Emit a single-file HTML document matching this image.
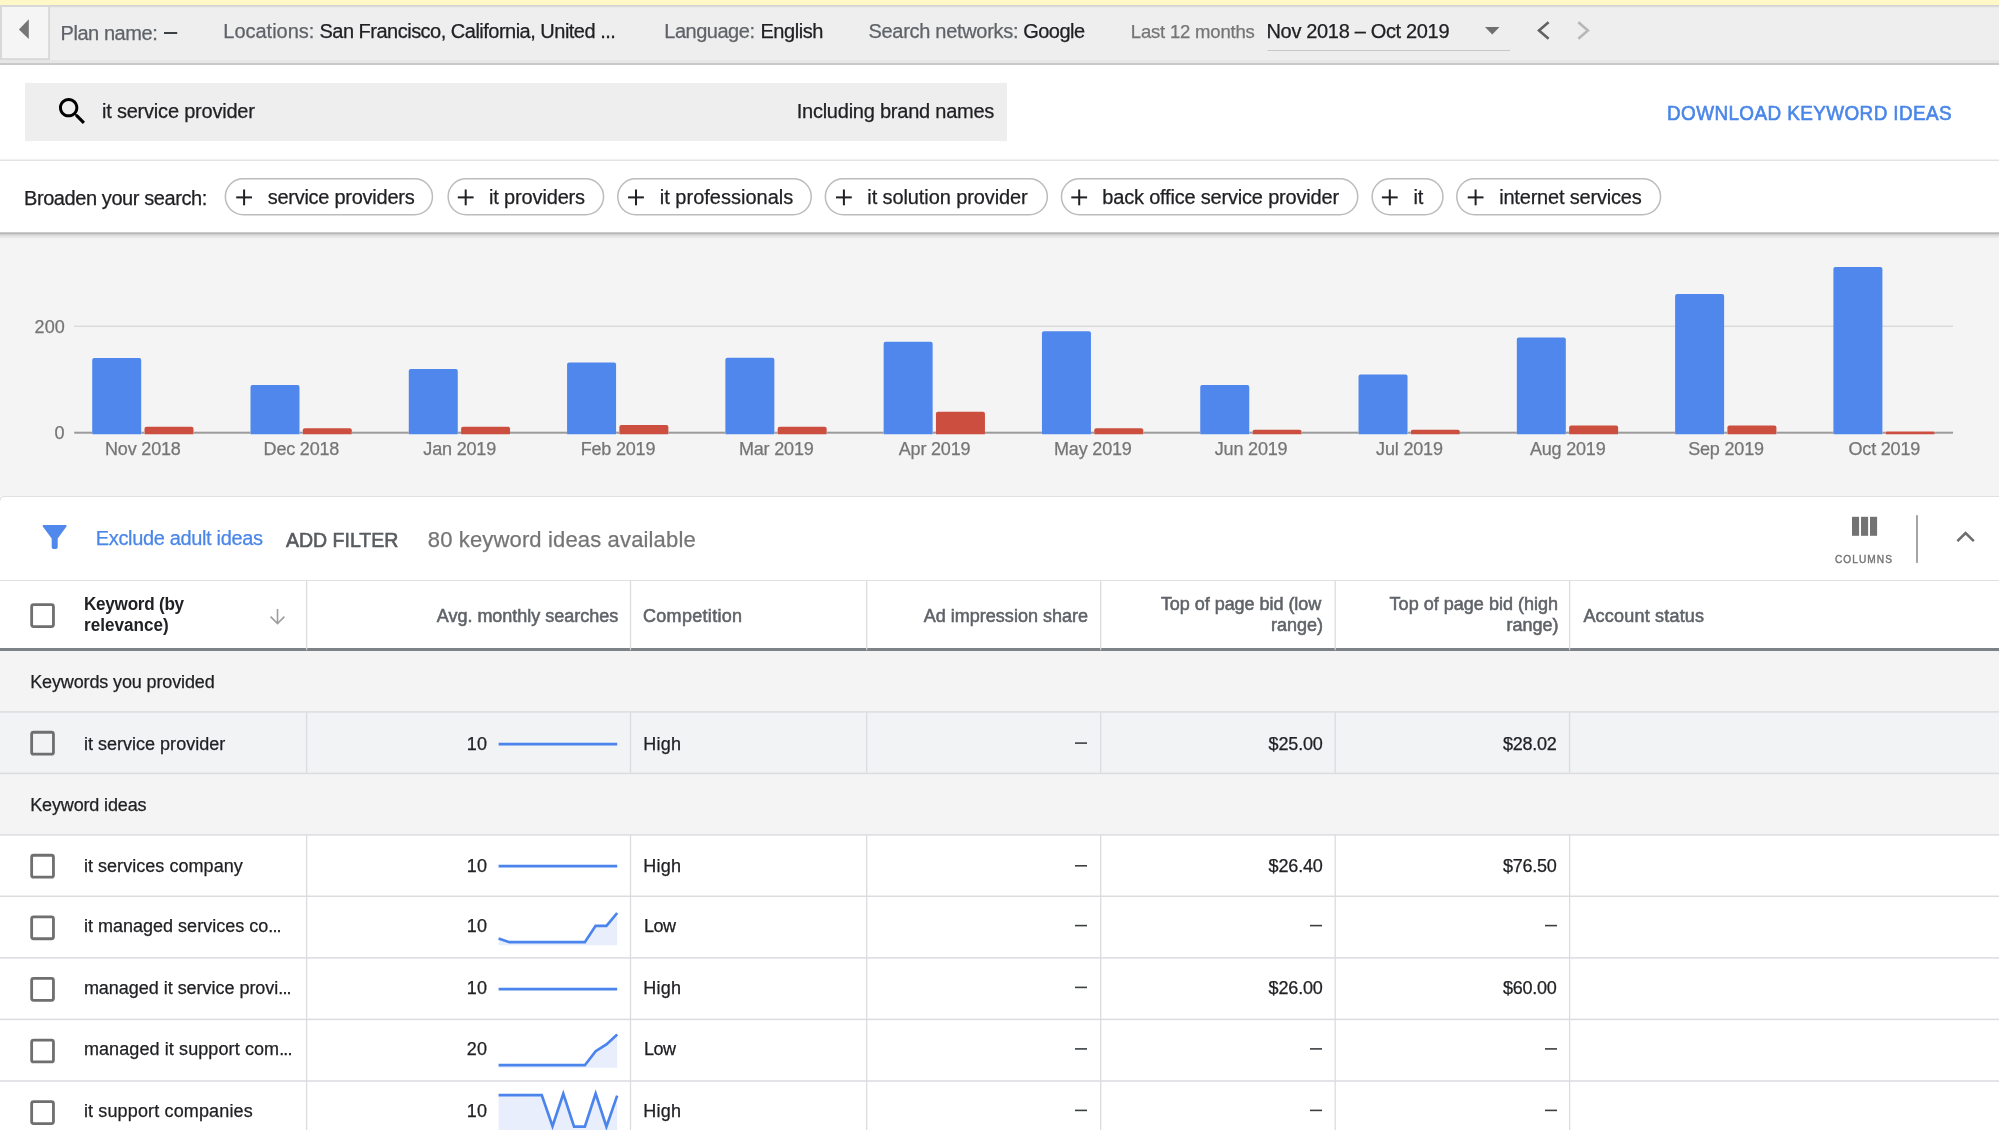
<!DOCTYPE html>
<html><head><meta charset="utf-8"><style>
html,body{margin:0;padding:0;width:1999px;height:1130px;overflow:hidden;background:#fff;}
.t{position:absolute;white-space:nowrap;font-family:"Liberation Sans",sans-serif;}
#tx{position:absolute;left:0;top:0;width:1999px;height:1130px;will-change:transform;}
svg{position:absolute;left:0;top:0;}
</style></head><body>
<svg width="1999" height="1130" viewBox="0 0 1999 1130">
<rect x="0.00" y="0.00" width="1999.00" height="5.00" fill="#fef7c7" />
<rect x="0.00" y="5.00" width="1999.00" height="60.00" fill="#eeeeee" />
<rect x="0.00" y="5.00" width="1999.00" height="1.00" fill="#d2d2d6" />
<defs><linearGradient id="ysh" x1="0" y1="0" x2="0" y2="1"><stop offset="0" stop-color="#000" stop-opacity="0.10"/><stop offset="1" stop-color="#000" stop-opacity="0"/></linearGradient></defs>
<rect x="0.00" y="6.00" width="1999.00" height="2.00" fill="url(#ysh)" />
<rect x="0.00" y="60.00" width="1999.00" height="3.00" fill="#e6e6e6" />
<rect x="0.00" y="63.00" width="1999.00" height="2.00" fill="#c9c9c9" />
<rect x="0.00" y="5.00" width="50.00" height="55.00" fill="#d8d8d8" />
<rect x="2.00" y="7.00" width="46.20" height="51.20" fill="#f5f5f5" />
<path d="M18.9,29.4 L28.8,19.2 L28.8,39 Z" fill="#767676" stroke="none" stroke-width="0" />
<rect x="164.00" y="32.00" width="13.20" height="2.00" fill="#3c4043" />
<rect x="1267.50" y="50.00" width="242.50" height="1.00" fill="#c8c8c8" />
<path d="M1485,27 L1499.5,27 L1492.25,34.5 Z" fill="#6f6f6f" stroke="none" stroke-width="0" />
<path d="M1547.6,23 L1539,30.4 L1547.6,37.8" fill="none" stroke="#616161" stroke-width="2.6" stroke-linecap="square" stroke-linejoin="miter"/>
<path d="M1579.3,23 L1587.9,30.4 L1579.3,37.8" fill="none" stroke="#b7b7b7" stroke-width="2.6" stroke-linecap="square" stroke-linejoin="miter"/>
<rect x="0.00" y="65.00" width="1999.00" height="167.50" fill="#ffffff" />
<rect x="25.00" y="83.00" width="982.00" height="58.00" fill="#eeeeee" />
<g transform="translate(54.54,93.54) scale(1.4866)"><path fill="#000" d="M15.5 14h-.79l-.28-.27C15.41 12.59 16 11.11 16 9.5 16 5.91 13.09 3 9.5 3S3 5.910 3 9.5 5.91 16 9.5 16c1.61 0 3.09-.59 4.23-1.57l.27.28v.79l5 4.99L20.49 19l-4.99-5zm-6 0C7.01 14 5 11.99 5 9.5S7.01 5 9.5 5 14 7.01 14 9.5 11.99 14 9.5 14z"/></g>
<rect x="0.00" y="159.50" width="1999.00" height="1.50" fill="#e3e3e3" />
<rect x="225.35" y="178.85" width="207.10" height="35.80" rx="17.90" fill="#fff" stroke="#bcbcbc" stroke-width="1.5"/>
<rect x="236.20" y="196.40" width="15.80" height="2.00" fill="#202124" />
<rect x="243.10" y="189.50" width="2.00" height="15.80" fill="#202124" />
<rect x="448.15" y="178.85" width="155.40" height="35.80" rx="17.90" fill="#fff" stroke="#bcbcbc" stroke-width="1.5"/>
<rect x="457.80" y="196.40" width="15.80" height="2.00" fill="#202124" />
<rect x="464.70" y="189.50" width="2.00" height="15.80" fill="#202124" />
<rect x="617.75" y="178.85" width="193.50" height="35.80" rx="17.90" fill="#fff" stroke="#bcbcbc" stroke-width="1.5"/>
<rect x="628.10" y="196.40" width="15.80" height="2.00" fill="#202124" />
<rect x="635.00" y="189.50" width="2.00" height="15.80" fill="#202124" />
<rect x="825.35" y="178.85" width="222.00" height="35.80" rx="17.90" fill="#fff" stroke="#bcbcbc" stroke-width="1.5"/>
<rect x="836.00" y="196.40" width="15.80" height="2.00" fill="#202124" />
<rect x="842.90" y="189.50" width="2.00" height="15.80" fill="#202124" />
<rect x="1061.45" y="178.85" width="296.30" height="35.80" rx="17.90" fill="#fff" stroke="#bcbcbc" stroke-width="1.5"/>
<rect x="1071.30" y="196.40" width="15.80" height="2.00" fill="#202124" />
<rect x="1078.20" y="189.50" width="2.00" height="15.80" fill="#202124" />
<rect x="1372.15" y="178.85" width="70.80" height="35.80" rx="17.90" fill="#fff" stroke="#bcbcbc" stroke-width="1.5"/>
<rect x="1381.90" y="196.40" width="15.80" height="2.00" fill="#202124" />
<rect x="1388.80" y="189.50" width="2.00" height="15.80" fill="#202124" />
<rect x="1456.75" y="178.85" width="203.80" height="35.80" rx="17.90" fill="#fff" stroke="#bcbcbc" stroke-width="1.5"/>
<rect x="1467.70" y="196.40" width="15.80" height="2.00" fill="#202124" />
<rect x="1474.60" y="189.50" width="2.00" height="15.80" fill="#202124" />
<rect x="0.00" y="232.50" width="1999.00" height="263.50" fill="#f4f4f4" />
<defs><linearGradient id="sh" x1="0" y1="0" x2="0" y2="1"><stop offset="0" stop-color="#000" stop-opacity="0.36"/><stop offset="0.35" stop-color="#000" stop-opacity="0.12"/><stop offset="1" stop-color="#000" stop-opacity="0"/></linearGradient></defs>
<rect x="0.00" y="232.50" width="1999.00" height="6.50" fill="url(#sh)" />
<rect x="74.20" y="325.60" width="1878.80" height="1.40" fill="#d9d9d9" />
<path d="M92.20,434.3 L92.20,359.90 Q92.20,357.90 94.20,357.90 L139.20,357.90 Q141.20,357.90 141.20,359.90 L141.20,434.3 Z" fill="#5087ec"/>
<path d="M144.50,434.3 L144.50,428.80 Q144.50,426.80 146.50,426.80 L191.50,426.80 Q193.50,426.80 193.50,428.80 L193.50,434.3 Z" fill="#cc4e3f"/>
<path d="M250.49,434.3 L250.49,387.00 Q250.49,385.00 252.49,385.00 L297.49,385.00 Q299.49,385.00 299.49,387.00 L299.49,434.3 Z" fill="#5087ec"/>
<path d="M302.79,434.3 L302.79,430.30 Q302.79,428.30 304.79,428.30 L349.79,428.30 Q351.79,428.30 351.79,430.30 L351.79,434.3 Z" fill="#cc4e3f"/>
<path d="M408.78,434.3 L408.78,371.00 Q408.78,369.00 410.78,369.00 L455.78,369.00 Q457.78,369.00 457.78,371.00 L457.78,434.3 Z" fill="#5087ec"/>
<path d="M461.08,434.3 L461.08,428.80 Q461.08,426.80 463.08,426.80 L508.08,426.80 Q510.08,426.80 510.08,428.80 L510.08,434.3 Z" fill="#cc4e3f"/>
<path d="M567.07,434.3 L567.07,364.40 Q567.07,362.40 569.07,362.40 L614.07,362.40 Q616.07,362.40 616.07,364.40 L616.07,434.3 Z" fill="#5087ec"/>
<path d="M619.37,434.3 L619.37,427.00 Q619.37,425.00 621.37,425.00 L666.37,425.00 Q668.37,425.00 668.37,427.00 L668.37,434.3 Z" fill="#cc4e3f"/>
<path d="M725.36,434.3 L725.36,359.80 Q725.36,357.80 727.36,357.80 L772.36,357.80 Q774.36,357.80 774.36,359.80 L774.36,434.3 Z" fill="#5087ec"/>
<path d="M777.66,434.3 L777.66,428.80 Q777.66,426.80 779.66,426.80 L824.66,426.80 Q826.66,426.80 826.66,428.80 L826.66,434.3 Z" fill="#cc4e3f"/>
<path d="M883.65,434.3 L883.65,343.70 Q883.65,341.70 885.65,341.70 L930.65,341.70 Q932.65,341.70 932.65,343.70 L932.65,434.3 Z" fill="#5087ec"/>
<path d="M935.95,434.3 L935.95,413.80 Q935.95,411.80 937.95,411.80 L982.95,411.80 Q984.95,411.80 984.95,413.80 L984.95,434.3 Z" fill="#cc4e3f"/>
<path d="M1041.95,434.3 L1041.95,333.20 Q1041.95,331.20 1043.95,331.20 L1088.95,331.20 Q1090.95,331.20 1090.95,333.20 L1090.95,434.3 Z" fill="#5087ec"/>
<path d="M1094.25,434.3 L1094.25,430.20 Q1094.25,428.20 1096.25,428.20 L1141.25,428.20 Q1143.25,428.20 1143.25,430.20 L1143.25,434.3 Z" fill="#cc4e3f"/>
<path d="M1200.24,434.3 L1200.24,387.00 Q1200.24,385.00 1202.24,385.00 L1247.24,385.00 Q1249.24,385.00 1249.24,387.00 L1249.24,434.3 Z" fill="#5087ec"/>
<path d="M1252.54,434.3 L1252.54,431.70 Q1252.54,429.70 1254.54,429.70 L1299.54,429.70 Q1301.54,429.70 1301.54,431.70 L1301.54,434.3 Z" fill="#cc4e3f"/>
<path d="M1358.53,434.3 L1358.53,376.50 Q1358.53,374.50 1360.53,374.50 L1405.53,374.50 Q1407.53,374.50 1407.53,376.50 L1407.53,434.3 Z" fill="#5087ec"/>
<path d="M1410.83,434.3 L1410.83,431.70 Q1410.83,429.70 1412.83,429.70 L1457.83,429.70 Q1459.83,429.70 1459.83,431.70 L1459.83,434.3 Z" fill="#cc4e3f"/>
<path d="M1516.82,434.3 L1516.82,339.40 Q1516.82,337.40 1518.82,337.40 L1563.82,337.40 Q1565.82,337.40 1565.82,339.40 L1565.82,434.3 Z" fill="#5087ec"/>
<path d="M1569.12,434.3 L1569.12,427.50 Q1569.12,425.50 1571.12,425.50 L1616.12,425.50 Q1618.12,425.50 1618.12,427.50 L1618.12,434.3 Z" fill="#cc4e3f"/>
<path d="M1675.11,434.3 L1675.11,296.00 Q1675.11,294.00 1677.11,294.00 L1722.11,294.00 Q1724.11,294.00 1724.11,296.00 L1724.11,434.3 Z" fill="#5087ec"/>
<path d="M1727.41,434.3 L1727.41,427.50 Q1727.41,425.50 1729.41,425.50 L1774.41,425.50 Q1776.41,425.50 1776.41,427.50 L1776.41,434.3 Z" fill="#cc4e3f"/>
<path d="M1833.40,434.3 L1833.40,269.00 Q1833.40,267.00 1835.40,267.00 L1880.40,267.00 Q1882.40,267.00 1882.40,269.00 L1882.40,434.3 Z" fill="#5087ec"/>
<path d="M1885.70,434.3 L1885.70,432.75 Q1885.70,431.50 1886.95,431.50 L1933.45,431.50 Q1934.70,431.50 1934.70,432.75 L1934.70,434.3 Z" fill="#cc4e3f"/>
<rect x="74.20" y="431.70" width="18.00" height="2.00" fill="#9b9b9b" />
<rect x="141.20" y="431.70" width="3.30" height="2.00" fill="#9b9b9b" />
<rect x="193.50" y="431.70" width="56.99" height="2.00" fill="#9b9b9b" />
<rect x="299.49" y="431.70" width="3.30" height="2.00" fill="#9b9b9b" />
<rect x="351.79" y="431.70" width="56.99" height="2.00" fill="#9b9b9b" />
<rect x="457.78" y="431.70" width="3.30" height="2.00" fill="#9b9b9b" />
<rect x="510.08" y="431.70" width="56.99" height="2.00" fill="#9b9b9b" />
<rect x="616.07" y="431.70" width="3.30" height="2.00" fill="#9b9b9b" />
<rect x="668.37" y="431.70" width="56.99" height="2.00" fill="#9b9b9b" />
<rect x="774.36" y="431.70" width="3.30" height="2.00" fill="#9b9b9b" />
<rect x="826.66" y="431.70" width="56.99" height="2.00" fill="#9b9b9b" />
<rect x="932.65" y="431.70" width="3.30" height="2.00" fill="#9b9b9b" />
<rect x="984.95" y="431.70" width="56.99" height="2.00" fill="#9b9b9b" />
<rect x="1090.95" y="431.70" width="3.30" height="2.00" fill="#9b9b9b" />
<rect x="1143.25" y="431.70" width="56.99" height="2.00" fill="#9b9b9b" />
<rect x="1249.24" y="431.70" width="3.30" height="2.00" fill="#9b9b9b" />
<rect x="1301.54" y="431.70" width="56.99" height="2.00" fill="#9b9b9b" />
<rect x="1407.53" y="431.70" width="3.30" height="2.00" fill="#9b9b9b" />
<rect x="1459.83" y="431.70" width="56.99" height="2.00" fill="#9b9b9b" />
<rect x="1565.82" y="431.70" width="3.30" height="2.00" fill="#9b9b9b" />
<rect x="1618.12" y="431.70" width="56.99" height="2.00" fill="#9b9b9b" />
<rect x="1724.11" y="431.70" width="3.30" height="2.00" fill="#9b9b9b" />
<rect x="1776.41" y="431.70" width="56.99" height="2.00" fill="#9b9b9b" />
<rect x="1882.40" y="431.70" width="3.30" height="2.00" fill="#9b9b9b" />
<rect x="1934.70" y="431.70" width="18.30" height="2.00" fill="#9b9b9b" />
<path d="M0,500 Q0,496 4,496 L1999,496 L1999,581 L0,581 Z" fill="#ffffff"/>
<path d="M0,500.5 Q0,496.5 4,496.5 L1999,496.5" fill="none" stroke="#e0e0e0" stroke-width="1.2"/>
<path d="M43.6,525 L65.7,525 Q67.4,525 66.5,526.6 L57.7,538.5 L57.7,547.2 Q57.7,549 55.9,549 L53.5,549 Q51.7,549 51.7,547.2 L51.7,538.5 L42.8,526.6 Q41.9,525 43.6,525 Z" fill="#5088ec" stroke="none" stroke-width="0" />
<rect x="1852.00" y="516.80" width="7.10" height="19.00" fill="#737373" />
<rect x="1861.00" y="516.80" width="7.10" height="19.00" fill="#737373" />
<rect x="1870.00" y="516.80" width="7.10" height="19.00" fill="#737373" />
<rect x="1916.20" y="515.20" width="1.60" height="47.70" fill="#8e8e8e" />
<path d="M1958.3,540.2 L1965.6,533.1 L1972.9,540.2" fill="none" stroke="#6e6e6e" stroke-width="2.6" stroke-linecap="square"/>
<rect x="0.00" y="580.00" width="1999.00" height="1.00" fill="#e0e0e0" />
<rect x="0.00" y="581.00" width="1999.00" height="67.00" fill="#ffffff" />
<rect x="305.95" y="581.00" width="1.30" height="67.00" fill="#dadce0" />
<rect x="629.85" y="581.00" width="1.30" height="67.00" fill="#dadce0" />
<rect x="866.05" y="581.00" width="1.30" height="67.00" fill="#dadce0" />
<rect x="1100.05" y="581.00" width="1.30" height="67.00" fill="#dadce0" />
<rect x="1334.55" y="581.00" width="1.30" height="67.00" fill="#dadce0" />
<rect x="1568.95" y="581.00" width="1.30" height="67.00" fill="#dadce0" />
<rect x="0.00" y="648.00" width="1999.00" height="3.00" fill="#7d8287" />
<rect x="305.95" y="648.00" width="1.30" height="2.20" fill="#c9cbcf" />
<rect x="629.85" y="648.00" width="1.30" height="2.20" fill="#c9cbcf" />
<rect x="866.05" y="648.00" width="1.30" height="2.20" fill="#c9cbcf" />
<rect x="1100.05" y="648.00" width="1.30" height="2.20" fill="#c9cbcf" />
<rect x="1334.55" y="648.00" width="1.30" height="2.20" fill="#c9cbcf" />
<rect x="1568.95" y="648.00" width="1.30" height="2.20" fill="#c9cbcf" />
<rect x="31.65" y="604.65" width="21.8" height="21.9" rx="2" fill="none" stroke="#6f6f6f" stroke-width="2.8"/>
<path d="M277.5,609 L277.5,623.3 M270.6,616.6 L277.5,623.5 L284.4,616.6" fill="none" stroke="#9e9e9e" stroke-width="1.6" />
<rect x="0.00" y="651.00" width="1999.00" height="60.90" fill="#f4f4f4" />
<rect x="0.00" y="711.90" width="1999.00" height="61.50" fill="#f1f3f4" />
<rect x="305.95" y="711.90" width="1.30" height="61.50" fill="#dadce0" />
<rect x="629.85" y="711.90" width="1.30" height="61.50" fill="#dadce0" />
<rect x="866.05" y="711.90" width="1.30" height="61.50" fill="#dadce0" />
<rect x="1100.05" y="711.90" width="1.30" height="61.50" fill="#dadce0" />
<rect x="1334.55" y="711.90" width="1.30" height="61.50" fill="#dadce0" />
<rect x="1568.95" y="711.90" width="1.30" height="61.50" fill="#dadce0" />
<rect x="0.00" y="773.40" width="1999.00" height="61.50" fill="#f4f4f4" />
<rect x="0.00" y="834.90" width="1999.00" height="61.40" fill="#ffffff" />
<rect x="305.95" y="834.90" width="1.30" height="61.40" fill="#dadce0" />
<rect x="629.85" y="834.90" width="1.30" height="61.40" fill="#dadce0" />
<rect x="866.05" y="834.90" width="1.30" height="61.40" fill="#dadce0" />
<rect x="1100.05" y="834.90" width="1.30" height="61.40" fill="#dadce0" />
<rect x="1334.55" y="834.90" width="1.30" height="61.40" fill="#dadce0" />
<rect x="1568.95" y="834.90" width="1.30" height="61.40" fill="#dadce0" />
<rect x="0.00" y="896.30" width="1999.00" height="61.60" fill="#ffffff" />
<rect x="305.95" y="896.30" width="1.30" height="61.60" fill="#dadce0" />
<rect x="629.85" y="896.30" width="1.30" height="61.60" fill="#dadce0" />
<rect x="866.05" y="896.30" width="1.30" height="61.60" fill="#dadce0" />
<rect x="1100.05" y="896.30" width="1.30" height="61.60" fill="#dadce0" />
<rect x="1334.55" y="896.30" width="1.30" height="61.60" fill="#dadce0" />
<rect x="1568.95" y="896.30" width="1.30" height="61.60" fill="#dadce0" />
<rect x="0.00" y="957.90" width="1999.00" height="61.50" fill="#ffffff" />
<rect x="305.95" y="957.90" width="1.30" height="61.50" fill="#dadce0" />
<rect x="629.85" y="957.90" width="1.30" height="61.50" fill="#dadce0" />
<rect x="866.05" y="957.90" width="1.30" height="61.50" fill="#dadce0" />
<rect x="1100.05" y="957.90" width="1.30" height="61.50" fill="#dadce0" />
<rect x="1334.55" y="957.90" width="1.30" height="61.50" fill="#dadce0" />
<rect x="1568.95" y="957.90" width="1.30" height="61.50" fill="#dadce0" />
<rect x="0.00" y="1019.40" width="1999.00" height="61.60" fill="#ffffff" />
<rect x="305.95" y="1019.40" width="1.30" height="61.60" fill="#dadce0" />
<rect x="629.85" y="1019.40" width="1.30" height="61.60" fill="#dadce0" />
<rect x="866.05" y="1019.40" width="1.30" height="61.60" fill="#dadce0" />
<rect x="1100.05" y="1019.40" width="1.30" height="61.60" fill="#dadce0" />
<rect x="1334.55" y="1019.40" width="1.30" height="61.60" fill="#dadce0" />
<rect x="1568.95" y="1019.40" width="1.30" height="61.60" fill="#dadce0" />
<rect x="0.00" y="1081.00" width="1999.00" height="61.60" fill="#ffffff" />
<rect x="305.95" y="1081.00" width="1.30" height="49.00" fill="#dadce0" />
<rect x="629.85" y="1081.00" width="1.30" height="49.00" fill="#dadce0" />
<rect x="866.05" y="1081.00" width="1.30" height="49.00" fill="#dadce0" />
<rect x="1100.05" y="1081.00" width="1.30" height="49.00" fill="#dadce0" />
<rect x="1334.55" y="1081.00" width="1.30" height="49.00" fill="#dadce0" />
<rect x="1568.95" y="1081.00" width="1.30" height="49.00" fill="#dadce0" />
<rect x="0.00" y="711.15" width="1999.00" height="1.50" fill="#dadce0" />
<rect x="0.00" y="772.65" width="1999.00" height="1.50" fill="#dadce0" />
<rect x="0.00" y="834.15" width="1999.00" height="1.50" fill="#dadce0" />
<rect x="0.00" y="895.55" width="1999.00" height="1.50" fill="#dadce0" />
<rect x="0.00" y="957.15" width="1999.00" height="1.50" fill="#dadce0" />
<rect x="0.00" y="1018.65" width="1999.00" height="1.50" fill="#dadce0" />
<rect x="0.00" y="1080.25" width="1999.00" height="1.50" fill="#dadce0" />
<rect x="31.65" y="732.25" width="21.8" height="21.9" rx="2" fill="none" stroke="#6f6f6f" stroke-width="2.8"/>
<rect x="31.65" y="855.25" width="21.8" height="21.9" rx="2" fill="none" stroke="#6f6f6f" stroke-width="2.8"/>
<rect x="31.65" y="916.85" width="21.8" height="21.9" rx="2" fill="none" stroke="#6f6f6f" stroke-width="2.8"/>
<rect x="31.65" y="978.45" width="21.8" height="21.9" rx="2" fill="none" stroke="#6f6f6f" stroke-width="2.8"/>
<rect x="31.65" y="1040.05" width="21.8" height="21.9" rx="2" fill="none" stroke="#6f6f6f" stroke-width="2.8"/>
<rect x="31.65" y="1101.65" width="21.8" height="21.9" rx="2" fill="none" stroke="#6f6f6f" stroke-width="2.8"/>
<line x1="498.60" y1="744.20" x2="617.20" y2="744.20" stroke="#4a84ec" stroke-width="2.7" />
<line x1="498.60" y1="866.20" x2="617.20" y2="866.20" stroke="#4a84ec" stroke-width="2.7" />
<line x1="498.60" y1="989.20" x2="617.20" y2="989.20" stroke="#4a84ec" stroke-width="2.7" />
<path d="M498.60,938.50 L509.38,942.20 L520.16,942.20 L530.95,942.20 L541.73,942.20 L552.51,942.20 L563.29,942.20 L574.07,942.20 L584.85,942.20 L595.64,925.80 L606.42,925.80 L617.20,913.00 L617.20,945.20 L498.60,945.20 Z" fill="#e8eefc"/>
<path d="M498.60,938.50 L509.38,942.20 L520.16,942.20 L530.95,942.20 L541.73,942.20 L552.51,942.20 L563.29,942.20 L574.07,942.20 L584.85,942.20 L595.64,925.80 L606.42,925.80 L617.20,913.00" fill="none" stroke="#4a84ec" stroke-width="2.7" stroke-linejoin="miter"/>
<path d="M498.60,1065.20 L509.38,1065.20 L520.16,1065.20 L530.95,1065.20 L541.73,1065.20 L552.51,1065.20 L563.29,1065.20 L574.07,1065.20 L584.85,1065.20 L595.64,1051.20 L606.42,1044.50 L617.20,1034.40 L617.20,1067.70 L498.60,1067.70 Z" fill="#e8eefc"/>
<path d="M498.60,1065.20 L509.38,1065.20 L520.16,1065.20 L530.95,1065.20 L541.73,1065.20 L552.51,1065.20 L563.29,1065.20 L574.07,1065.20 L584.85,1065.20 L595.64,1051.20 L606.42,1044.50 L617.20,1034.40" fill="none" stroke="#4a84ec" stroke-width="2.7" stroke-linejoin="miter"/>
<path d="M498.60,1095.10 L509.38,1095.10 L520.16,1095.10 L530.95,1095.10 L541.73,1095.10 L552.51,1126.20 L563.29,1093.70 L574.07,1126.70 L584.85,1126.70 L595.64,1093.70 L606.42,1126.70 L617.20,1095.60 L617.20,1132.00 L498.60,1132.00 Z" fill="#e8eefc"/>
<path d="M498.60,1095.10 L509.38,1095.10 L520.16,1095.10 L530.95,1095.10 L541.73,1095.10 L552.51,1126.20 L563.29,1093.70 L574.07,1126.70 L584.85,1126.70 L595.64,1093.70 L606.42,1126.70 L617.20,1095.60" fill="none" stroke="#4a84ec" stroke-width="2.7" stroke-linejoin="miter"/>
<rect x="1075.00" y="742.30" width="12.00" height="1.60" fill="#3c4043" />
<rect x="1075.00" y="865.00" width="12.00" height="1.60" fill="#3c4043" />
<rect x="1075.00" y="924.80" width="12.00" height="1.60" fill="#3c4043" />
<rect x="1310.00" y="924.80" width="12.00" height="1.60" fill="#3c4043" />
<rect x="1545.00" y="924.80" width="12.00" height="1.60" fill="#3c4043" />
<rect x="1075.00" y="986.60" width="12.00" height="1.60" fill="#3c4043" />
<rect x="1075.00" y="1048.10" width="12.00" height="1.60" fill="#3c4043" />
<rect x="1310.00" y="1048.10" width="12.00" height="1.60" fill="#3c4043" />
<rect x="1545.00" y="1048.10" width="12.00" height="1.60" fill="#3c4043" />
<rect x="1075.00" y="1109.60" width="12.00" height="1.60" fill="#3c4043" />
<rect x="1310.00" y="1109.60" width="12.00" height="1.60" fill="#3c4043" />
<rect x="1545.00" y="1109.60" width="12.00" height="1.60" fill="#3c4043" />
</svg>
<div id="tx">
<div class="t" style="left:60.50px;top:23.00px;font-size:20px;line-height:20px;font-weight:400;-webkit-text-stroke:0.25px currentColor;letter-spacing:-0.433px;color:#5f6368">Plan name:</div>
<div class="t" style="left:223.30px;top:21.30px;font-size:20px;line-height:20px;font-weight:400;-webkit-text-stroke:0.25px currentColor;letter-spacing:-0.011px;color:#5f6368">Locations:</div>
<div class="t" style="left:319.50px;top:21.30px;font-size:20px;line-height:20px;font-weight:400;-webkit-text-stroke:0.25px currentColor;letter-spacing:-0.508px;color:#202124">San Francisco, California, United ...</div>
<div class="t" style="left:664.30px;top:21.30px;font-size:20px;line-height:20px;font-weight:400;-webkit-text-stroke:0.25px currentColor;letter-spacing:-0.487px;color:#5f6368">Language:</div>
<div class="t" style="left:760.40px;top:21.30px;font-size:20px;line-height:20px;font-weight:400;-webkit-text-stroke:0.25px currentColor;letter-spacing:-0.417px;color:#202124">English</div>
<div class="t" style="left:868.50px;top:21.30px;font-size:20px;line-height:20px;font-weight:400;-webkit-text-stroke:0.25px currentColor;letter-spacing:-0.300px;color:#5f6368">Search networks:</div>
<div class="t" style="left:1023.20px;top:21.30px;font-size:20px;line-height:20px;font-weight:400;-webkit-text-stroke:0.25px currentColor;letter-spacing:-0.520px;color:#202124">Google</div>
<div class="t" style="left:1130.80px;top:23.20px;font-size:18.5px;line-height:18.5px;font-weight:400;-webkit-text-stroke:0.25px currentColor;letter-spacing:-0.192px;color:#757575">Last 12 months</div>
<div class="t" style="left:1266.50px;top:21.20px;font-size:20px;line-height:20px;font-weight:400;-webkit-text-stroke:0.25px currentColor;letter-spacing:-0.333px;color:#202124">Nov 2018 – Oct 2019</div>
<div class="t" style="left:102.00px;top:101.00px;font-size:20px;line-height:20px;font-weight:400;-webkit-text-stroke:0.25px currentColor;letter-spacing:-0.211px;color:#202124">it service provider</div>
<div class="t" style="left:796.70px;top:101.30px;font-size:20px;line-height:20px;font-weight:400;-webkit-text-stroke:0.25px currentColor;letter-spacing:-0.235px;color:#202124">Including brand names</div>
<div class="t" style="left:1667.40px;top:101.90px;font-size:21px;line-height:21px;font-weight:400;-webkit-text-stroke:0.65px currentColor;transform:scaleX(0.9);transform-origin:0 0;letter-spacing:0.450px;color:#4a86e8">DOWNLOAD KEYWORD IDEAS</div>
<div class="t" style="left:24.00px;top:187.90px;font-size:20px;line-height:20px;font-weight:400;-webkit-text-stroke:0.25px currentColor;letter-spacing:-0.421px;color:#202124">Broaden your search:</div>
<div class="t" style="left:267.70px;top:187.40px;font-size:20px;line-height:20px;font-weight:400;-webkit-text-stroke:0.25px currentColor;letter-spacing:-0.262px;color:#202124">service providers</div>
<div class="t" style="left:489.00px;top:187.40px;font-size:20px;line-height:20px;font-weight:400;-webkit-text-stroke:0.25px currentColor;letter-spacing:-0.155px;color:#202124">it providers</div>
<div class="t" style="left:659.80px;top:187.40px;font-size:20px;line-height:20px;font-weight:400;-webkit-text-stroke:0.25px currentColor;letter-spacing:0.007px;color:#202124">it professionals</div>
<div class="t" style="left:867.30px;top:187.40px;font-size:20px;line-height:20px;font-weight:400;-webkit-text-stroke:0.25px currentColor;letter-spacing:-0.100px;color:#202124">it solution provider</div>
<div class="t" style="left:1102.30px;top:187.40px;font-size:20px;line-height:20px;font-weight:400;-webkit-text-stroke:0.25px currentColor;letter-spacing:-0.193px;color:#202124">back office service provider</div>
<div class="t" style="left:1413.40px;top:187.40px;font-size:20px;line-height:20px;font-weight:400;-webkit-text-stroke:0.25px currentColor;letter-spacing:-0.200px;color:#202124">it</div>
<div class="t" style="left:1499.20px;top:187.40px;font-size:20px;line-height:20px;font-weight:400;-webkit-text-stroke:0.25px currentColor;letter-spacing:-0.194px;color:#202124">internet services</div>
<div class="t" style="left:34.50px;top:317.60px;font-size:18px;line-height:18px;font-weight:400;-webkit-text-stroke:0.25px currentColor;letter-spacing:0.150px;color:#757575">200</div>
<div class="t" style="left:54.60px;top:423.90px;font-size:18px;line-height:18px;font-weight:400;-webkit-text-stroke:0.25px currentColor;letter-spacing:0.000px;color:#757575">0</div>
<div class="t" style="left:105.00px;top:439.50px;font-size:18px;line-height:18px;font-weight:400;-webkit-text-stroke:0.25px currentColor;letter-spacing:-0.179px;color:#757575">Nov 2018</div>
<div class="t" style="left:95.80px;top:528.30px;font-size:20px;line-height:20px;font-weight:400;-webkit-text-stroke:0.25px currentColor;letter-spacing:-0.350px;color:#4a86e8">Exclude adult ideas</div>
<div class="t" style="left:286.40px;top:528.90px;font-size:21px;line-height:21px;font-weight:400;-webkit-text-stroke:0.65px currentColor;transform:scaleX(0.93);transform-origin:0 0;letter-spacing:-0.024px;color:#595c5f">ADD FILTER</div>
<div class="t" style="left:427.75px;top:528.75px;font-size:22px;line-height:22px;font-weight:400;-webkit-text-stroke:0.25px currentColor;letter-spacing:0.150px;color:#757575">80 keyword ideas available</div>
<div class="t" style="left:1835.20px;top:554.10px;font-size:11.5px;line-height:11.5px;font-weight:400;-webkit-text-stroke:0.45px currentColor;transform:scaleX(0.88);transform-origin:0 0;letter-spacing:1.193px;color:#757575">COLUMNS</div>
<div class="t" style="left:84.00px;top:594.80px;font-size:18px;line-height:18px;font-weight:700;transform:scaleX(0.95);transform-origin:0 0;letter-spacing:-0.263px;color:#202124">Keyword (by</div>
<div class="t" style="left:84.00px;top:616.30px;font-size:18px;line-height:18px;font-weight:700;transform:scaleX(0.95);transform-origin:0 0;letter-spacing:0.000px;color:#202124">relevance)</div>
<div class="t" style="left:436.75px;top:606.75px;font-size:18px;line-height:18px;font-weight:400;-webkit-text-stroke:0.55px currentColor;letter-spacing:-0.012px;color:#5f6368">Avg. monthly searches</div>
<div class="t" style="left:643.00px;top:606.75px;font-size:18px;line-height:18px;font-weight:400;-webkit-text-stroke:0.55px currentColor;letter-spacing:0.300px;color:#5f6368">Competition</div>
<div class="t" style="left:923.70px;top:606.75px;font-size:18px;line-height:18px;font-weight:400;-webkit-text-stroke:0.55px currentColor;letter-spacing:0.017px;color:#5f6368">Ad impression share</div>
<div class="t" style="left:1160.90px;top:595.00px;font-size:18px;line-height:18px;font-weight:400;-webkit-text-stroke:0.55px currentColor;letter-spacing:-0.037px;color:#5f6368">Top of page bid (low</div>
<div class="t" style="left:1271.00px;top:616.10px;font-size:18px;line-height:18px;font-weight:400;-webkit-text-stroke:0.55px currentColor;letter-spacing:0.000px;color:#5f6368">range)</div>
<div class="t" style="left:1389.60px;top:595.00px;font-size:18px;line-height:18px;font-weight:400;-webkit-text-stroke:0.55px currentColor;letter-spacing:0.020px;color:#5f6368">Top of page bid (high</div>
<div class="t" style="left:1506.40px;top:616.10px;font-size:18px;line-height:18px;font-weight:400;-webkit-text-stroke:0.55px currentColor;letter-spacing:0.000px;color:#5f6368">range)</div>
<div class="t" style="left:1583.40px;top:606.90px;font-size:18px;line-height:18px;font-weight:400;-webkit-text-stroke:0.55px currentColor;letter-spacing:0.200px;color:#5f6368">Account status</div>
<div class="t" style="left:30.20px;top:673.00px;font-size:18px;line-height:18px;font-weight:400;-webkit-text-stroke:0.25px currentColor;letter-spacing:-0.130px;color:#202124">Keywords you provided</div>
<div class="t" style="left:30.20px;top:795.60px;font-size:18px;line-height:18px;font-weight:400;-webkit-text-stroke:0.25px currentColor;letter-spacing:-0.142px;color:#202124">Keyword ideas</div>
<div class="t" style="left:83.90px;top:734.50px;font-size:18px;line-height:18px;font-weight:400;-webkit-text-stroke:0.25px currentColor;letter-spacing:0.017px;color:#202124">it service provider</div>
<div class="t" style="left:466.80px;top:734.50px;font-size:18px;line-height:18px;font-weight:400;-webkit-text-stroke:0.25px currentColor;letter-spacing:0.200px;color:#202124">10</div>
<div class="t" style="left:643.30px;top:734.50px;font-size:18px;line-height:18px;font-weight:400;-webkit-text-stroke:0.25px currentColor;letter-spacing:0.200px;color:#202124">High</div>
<div class="t" style="left:1268.60px;top:734.50px;font-size:18px;line-height:18px;font-weight:400;-webkit-text-stroke:0.25px currentColor;letter-spacing:-0.160px;color:#202124">$25.00</div>
<div class="t" style="left:1503.00px;top:734.50px;font-size:18px;line-height:18px;font-weight:400;-webkit-text-stroke:0.25px currentColor;letter-spacing:-0.240px;color:#202124">$28.02</div>
<div class="t" style="left:83.90px;top:857.20px;font-size:18px;line-height:18px;font-weight:400;-webkit-text-stroke:0.25px currentColor;letter-spacing:0.044px;color:#202124">it services company</div>
<div class="t" style="left:466.80px;top:857.20px;font-size:18px;line-height:18px;font-weight:400;-webkit-text-stroke:0.25px currentColor;letter-spacing:0.200px;color:#202124">10</div>
<div class="t" style="left:643.30px;top:857.20px;font-size:18px;line-height:18px;font-weight:400;-webkit-text-stroke:0.25px currentColor;letter-spacing:0.200px;color:#202124">High</div>
<div class="t" style="left:1268.60px;top:857.20px;font-size:18px;line-height:18px;font-weight:400;-webkit-text-stroke:0.25px currentColor;letter-spacing:-0.160px;color:#202124">$26.40</div>
<div class="t" style="left:1503.00px;top:857.20px;font-size:18px;line-height:18px;font-weight:400;-webkit-text-stroke:0.25px currentColor;letter-spacing:-0.240px;color:#202124">$76.50</div>
<div class="t" style="left:83.90px;top:917.00px;font-size:18px;line-height:18px;font-weight:400;-webkit-text-stroke:0.25px currentColor;letter-spacing:0.014px;color:#202124">it managed services co<span style="letter-spacing:-0.9px">...</span></div>
<div class="t" style="left:466.80px;top:917.00px;font-size:18px;line-height:18px;font-weight:400;-webkit-text-stroke:0.25px currentColor;letter-spacing:0.200px;color:#202124">10</div>
<div class="t" style="left:644.10px;top:917.00px;font-size:18px;line-height:18px;font-weight:400;-webkit-text-stroke:0.25px currentColor;letter-spacing:-0.550px;color:#202124">Low</div>
<div class="t" style="left:83.90px;top:978.80px;font-size:18px;line-height:18px;font-weight:400;-webkit-text-stroke:0.25px currentColor;letter-spacing:-0.029px;color:#202124">managed it service provi<span style="letter-spacing:-0.9px">...</span></div>
<div class="t" style="left:466.80px;top:978.80px;font-size:18px;line-height:18px;font-weight:400;-webkit-text-stroke:0.25px currentColor;letter-spacing:0.200px;color:#202124">10</div>
<div class="t" style="left:643.30px;top:978.80px;font-size:18px;line-height:18px;font-weight:400;-webkit-text-stroke:0.25px currentColor;letter-spacing:0.200px;color:#202124">High</div>
<div class="t" style="left:1268.60px;top:978.80px;font-size:18px;line-height:18px;font-weight:400;-webkit-text-stroke:0.25px currentColor;letter-spacing:-0.160px;color:#202124">$26.00</div>
<div class="t" style="left:1503.00px;top:978.80px;font-size:18px;line-height:18px;font-weight:400;-webkit-text-stroke:0.25px currentColor;letter-spacing:-0.240px;color:#202124">$60.00</div>
<div class="t" style="left:83.90px;top:1040.30px;font-size:18px;line-height:18px;font-weight:400;-webkit-text-stroke:0.25px currentColor;letter-spacing:0.100px;color:#202124">managed it support com<span style="letter-spacing:-0.9px">...</span></div>
<div class="t" style="left:466.80px;top:1040.30px;font-size:18px;line-height:18px;font-weight:400;-webkit-text-stroke:0.25px currentColor;letter-spacing:0.200px;color:#202124">20</div>
<div class="t" style="left:644.10px;top:1040.30px;font-size:18px;line-height:18px;font-weight:400;-webkit-text-stroke:0.25px currentColor;letter-spacing:-0.550px;color:#202124">Low</div>
<div class="t" style="left:83.90px;top:1101.80px;font-size:18px;line-height:18px;font-weight:400;-webkit-text-stroke:0.25px currentColor;letter-spacing:0.142px;color:#202124">it support companies</div>
<div class="t" style="left:466.80px;top:1101.80px;font-size:18px;line-height:18px;font-weight:400;-webkit-text-stroke:0.25px currentColor;letter-spacing:0.200px;color:#202124">10</div>
<div class="t" style="left:643.30px;top:1101.80px;font-size:18px;line-height:18px;font-weight:400;-webkit-text-stroke:0.25px currentColor;letter-spacing:0.200px;color:#202124">High</div>
<div class="t" style="left:101.39px;width:400px;text-align:center;top:439.50px;font-size:18px;line-height:18px;letter-spacing:-0.179px;-webkit-text-stroke:0.25px currentColor;color:#757575">Dec 2018</div>
<div class="t" style="left:259.68px;width:400px;text-align:center;top:439.50px;font-size:18px;line-height:18px;letter-spacing:-0.179px;-webkit-text-stroke:0.25px currentColor;color:#757575">Jan 2019</div>
<div class="t" style="left:417.97px;width:400px;text-align:center;top:439.50px;font-size:18px;line-height:18px;letter-spacing:-0.179px;-webkit-text-stroke:0.25px currentColor;color:#757575">Feb 2019</div>
<div class="t" style="left:576.26px;width:400px;text-align:center;top:439.50px;font-size:18px;line-height:18px;letter-spacing:-0.179px;-webkit-text-stroke:0.25px currentColor;color:#757575">Mar 2019</div>
<div class="t" style="left:734.55px;width:400px;text-align:center;top:439.50px;font-size:18px;line-height:18px;letter-spacing:-0.179px;-webkit-text-stroke:0.25px currentColor;color:#757575">Apr 2019</div>
<div class="t" style="left:892.85px;width:400px;text-align:center;top:439.50px;font-size:18px;line-height:18px;letter-spacing:-0.179px;-webkit-text-stroke:0.25px currentColor;color:#757575">May 2019</div>
<div class="t" style="left:1051.14px;width:400px;text-align:center;top:439.50px;font-size:18px;line-height:18px;letter-spacing:-0.179px;-webkit-text-stroke:0.25px currentColor;color:#757575">Jun 2019</div>
<div class="t" style="left:1209.43px;width:400px;text-align:center;top:439.50px;font-size:18px;line-height:18px;letter-spacing:-0.179px;-webkit-text-stroke:0.25px currentColor;color:#757575">Jul 2019</div>
<div class="t" style="left:1367.72px;width:400px;text-align:center;top:439.50px;font-size:18px;line-height:18px;letter-spacing:-0.179px;-webkit-text-stroke:0.25px currentColor;color:#757575">Aug 2019</div>
<div class="t" style="left:1526.01px;width:400px;text-align:center;top:439.50px;font-size:18px;line-height:18px;letter-spacing:-0.179px;-webkit-text-stroke:0.25px currentColor;color:#757575">Sep 2019</div>
<div class="t" style="left:1684.30px;width:400px;text-align:center;top:439.50px;font-size:18px;line-height:18px;letter-spacing:-0.179px;-webkit-text-stroke:0.25px currentColor;color:#757575">Oct 2019</div>
</div>
</body></html>
